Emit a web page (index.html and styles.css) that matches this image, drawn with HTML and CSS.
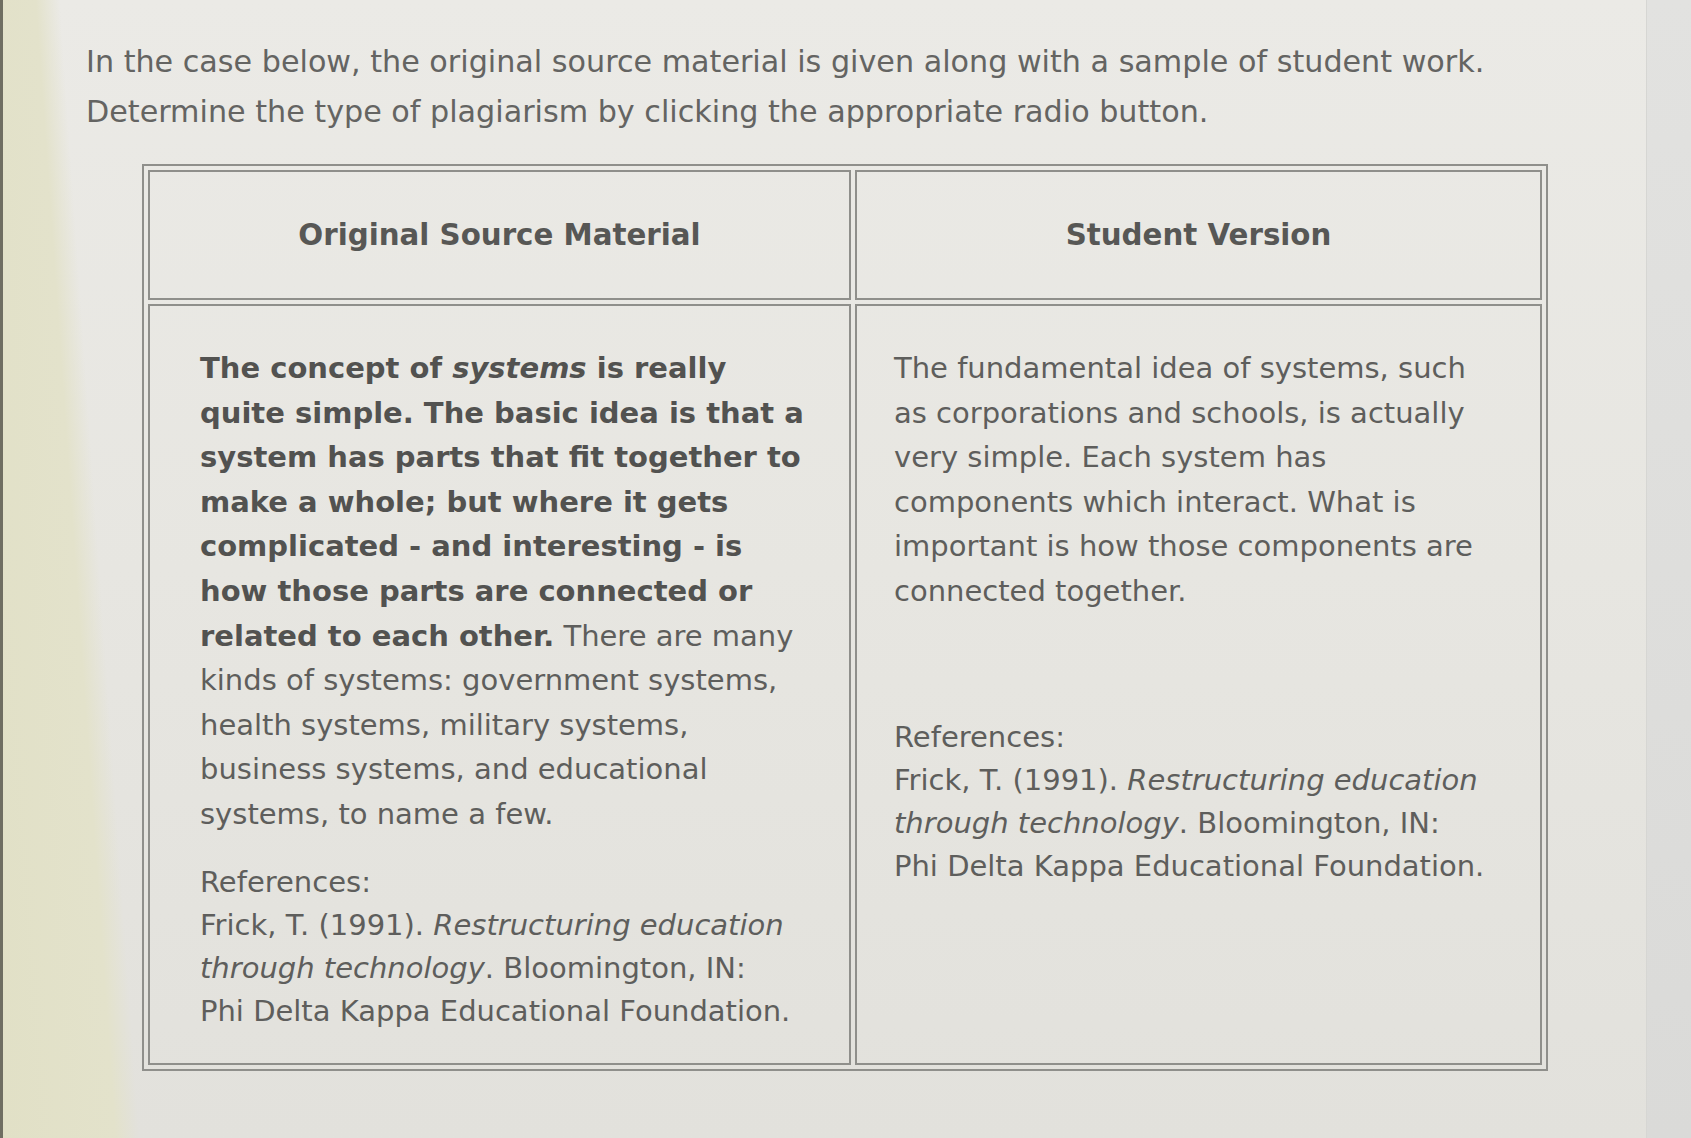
FILE: index.html
```html
<!DOCTYPE html>
<html lang="en">
<head>
<meta charset="utf-8">
<title>Plagiarism case</title>
<link rel="stylesheet" href="styles.css">
</head>
<body>
<div class="screen">
  <main class="page">
    <p class="intro">In the case below, the original source material is given along with a sample of student work.<br>Determine the type of plagiarism by clicking the appropriate radio button.</p>
    <table class="case">
      <colgroup><col class="col-src"><col class="col-stu"></colgroup>
      <tr>
        <th>Original Source Material</th>
        <th>Student Version</th>
      </tr>
      <tr>
        <td class="src">
          <p class="text"><strong>The concept of <em>systems</em> is really quite simple. The basic idea is that a system has parts that fit together to make a whole; but where it gets complicated - and interesting - is how those parts are connected or related to each other.</strong> There are many kinds of systems: government systems, health systems, military systems, business systems, and educational systems, to name a few.</p>
          <p class="refs">References:<br>Frick, T. (1991). <em>Restructuring education</em><br><em>through technology</em>. Bloomington, IN:<br>Phi Delta Kappa Educational Foundation.</p>
        </td>
        <td class="stu">
          <p class="text">The fundamental idea of systems, such as corporations and schools, is actually very simple. Each system has components which interact. What is important is how those components are connected together.</p>
          <p class="refs refs-stu">References:<br>Frick, T. (1991). <em>Restructuring education</em><br><em>through technology</em>. Bloomington, IN:<br>Phi Delta Kappa Educational Foundation.</p>
        </td>
      </tr>
    </table>
  </main>
  <div class="edge"></div>
</div>
</body>
</html>
```
FILE: styles.css
```css
html, body {
  margin: 0;
  padding: 0;
}

body {
  width: 1691px;
  height: 1138px;
  overflow: hidden;
  font-family: "DejaVu Sans", Verdana, sans-serif;
  color: #5e5e5c;
}

.screen {
  display: flex;
  height: 1138px;
  box-sizing: border-box;
  border-left: 3px solid #6f6e62;
  background:
    linear-gradient(86deg, #e1e0c6 0px, #e3e2cb 112px, rgba(230, 229, 222, 0) 136px),
    linear-gradient(to bottom, #ebeae6 0%, #e7e6e1 50%, #e2e1dc 100%);
}

.page {
  flex: 1;
  padding-left: 83px;
}

.edge {
  width: 44px;
  flex: none;
  background: linear-gradient(to bottom, #e2e2e0 0%, #dadad8 100%);
  border-left: 1px solid #d6d6d3;
}

.intro {
  margin: 37px 0 0 0;
  font-size: 30.2px;
  line-height: 50px;
  color: #646462;
}

.case {
  margin: 27px 0 0 56px;
  width: 1406px;
  table-layout: fixed;
  border-collapse: separate;
  border-spacing: 4px;
  border: 2px solid #8f8f8b;
}

.col-src { width: 703px; }
.col-stu { width: auto; }

.case th,
.case td {
  border: 2px solid #8f8f8b;
}

.case th {
  height: 126px;
  padding: 0;
  font-size: 29.3px;
  font-weight: bold;
  color: #575755;
  text-align: center;
  vertical-align: middle;
}

.case td {
  vertical-align: top;
  font-size: 29px;
  padding-top: 40px;
  padding-bottom: 30px;
}

.case td.src {
  padding-left: 50px;
  padding-right: 43px;
}

.case td.stu {
  padding-left: 37px;
  padding-right: 46px;
}

.text {
  margin: 0;
  line-height: 44.6px;
}

.text strong {
  color: #525250;
}

.refs {
  margin: 24px 0 0 0;
  line-height: 43px;
}

.refs-stu {
  margin-top: 102px;
}
```
